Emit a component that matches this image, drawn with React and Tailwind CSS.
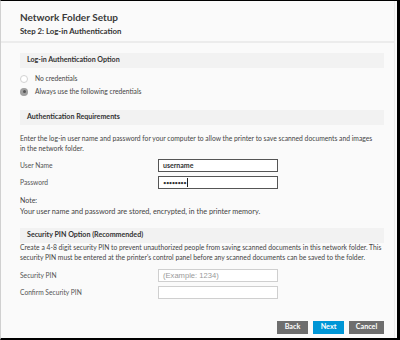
import React from "react";

function SectionBar({ children, className = "" }) {
  return (
    <div className={"h-[15px] bg-[#f2f2f2] flex items-center pl-[7px] font-bold text-[7.1px] text-[#333] " + className}>
      {children}
    </div>
  );
}

function Radio({ checked, label }) {
  return (
    <div className="h-[13px] flex items-center">
      <span className="w-[8px] h-[8px] rounded-full border border-[#d2d2d2] bg-white flex items-center justify-center ml-[0px] mr-[7px]">
        {checked && <span className="w-[8px] h-[8px] rounded-full bg-[#a0a0a0] flex items-center justify-center shrink-0"><span className="w-[3px] h-[3px] rounded-full bg-[#555]" /></span>}
      </span>
      <span className="text-[6.7px] text-[#444]">{label}</span>
    </div>
  );
}

function Field({ label, children, className = "" }) {
  return (
    <div className={"grid grid-cols-[138px_120px] items-center " + className}>
      <span className="text-[6.7px] text-[#555]">{label}</span>
      {children}
    </div>
  );
}

export default function App() {
  return (
    <div
      className="w-[400px] h-[340px] bg-[#fafafa] border-t border-t-black border-r-[3px] border-r-black border-b-2 border-b-black border-l border-l-[#d0d0d0] flex flex-col overflow-hidden"
      style={{ fontFamily: "Lato, 'Noto Sans', sans-serif" }}
    >
      <div className="flex flex-1 min-h-0">
        <div className="flex-1 flex flex-col min-w-0">
          <div className="h-[40px] px-[19px] pt-[9px] flex flex-col">
            <div className="h-[14px] leading-[14px] text-[10px] font-bold text-[#3a3a3a]">Network Folder Setup</div>
            <div className="h-[14px] leading-[14px] text-[7.8px] font-bold text-[#333]">Step 2: Log-in Authentication</div>
          </div>
          <div className="h-[2px] bg-[#ececec]" />
          <div className="pl-[19px] pr-[10px] pt-[10px] flex flex-col">
            <SectionBar>Log-in Authentication Option</SectionBar>
            <div className="pt-[4px] flex flex-col">
              <Radio label="No credentials" />
              <Radio checked label="Always use the following credentials" />
            </div>
            <SectionBar className="mt-[12px]">Authentication Requirements</SectionBar>
            <p className="mt-[8px] text-[6.75px] leading-[10px] text-[#444] whitespace-nowrap">
              Enter the log-in user name and password for your computer to allow the printer to save scanned documents and images
              <br />
              in the network folder.
            </p>
            <Field label="User Name" className="mt-[6px]">
              <div className="h-[13px] border border-[#555] bg-white flex items-center pl-[4px] text-[7px] font-bold text-[#333]">username</div>
            </Field>
            <Field label="Password" className="mt-[4px]">
              <div className="h-[13px] border border-[#555] bg-white flex items-center pl-[4px] text-[6px] text-[#333] tracking-[-0.6px]">
                <span className="leading-none">••••••••</span>
                <span className="w-px h-[9px] bg-[#222] ml-[1px]" />
              </div>
            </Field>
            <div className="mt-[6px] text-[7px] leading-[11px] text-[#444]">Note:</div>
            <div className="text-[7.3px] leading-[11px] text-[#444]">Your user name and password are stored, encrypted, in the printer memory.</div>
            <SectionBar className="mt-[11px]">Security PIN Option (Recommended)</SectionBar>
            <p className="mt-[0px] text-[6.75px] leading-[9.5px] text-[#444] whitespace-nowrap">
              Create a 4-8 digit security PIN to prevent unauthorized people from saving scanned documents in this network folder. This
              <br />
              security PIN must be entered at the printer's control panel before any scanned documents can be saved to the folder.
            </p>
            <Field label="Security PIN" className="mt-[7px]">
              <div className="h-[13px] border border-[#cfcfcf] bg-white flex items-center pl-[4px] text-[7.6px] text-[#9a9a9a]" style={{ fontFamily: "'Liberation Sans', Arial, sans-serif" }}>(Example: 1234)</div>
            </Field>
            <Field label="Confirm Security PIN" className="mt-[4px]">
              <div className="h-[13px] border border-[#cfcfcf] bg-white" />
            </Field>
            <div className="mt-[22px] flex justify-end gap-[5px]">
              <button className="w-[31px] h-[13px] bg-[#6e6e6e] text-white text-[7.2px] font-bold flex items-center justify-center">Back</button>
              <button className="w-[31px] h-[13px] bg-[#0096d6] text-white text-[7.2px] font-bold flex items-center justify-center">Next</button>
              <button className="w-[35px] h-[13px] bg-[#6e6e6e] text-white text-[7.2px] font-bold flex items-center justify-center">Cancel</button>
            </div>
          </div>
        </div>
        <div className="w-[3px] border-l border-l-[#ececec]" />
      </div>
    </div>
  );
}
